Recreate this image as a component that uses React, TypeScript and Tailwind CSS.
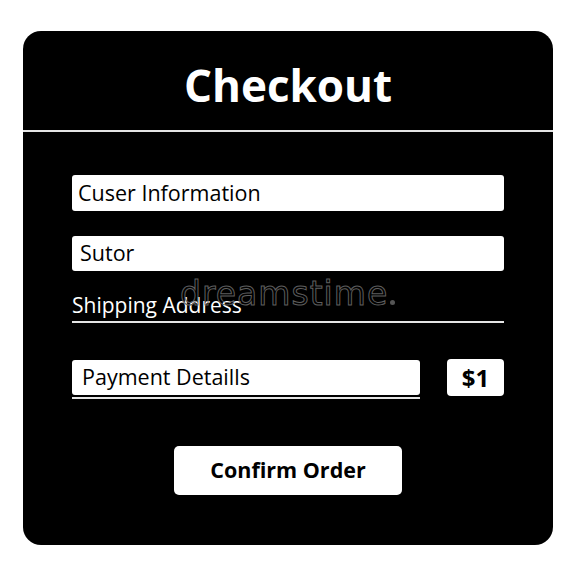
export default function App() {
  return (
    <div className="w-[576px] h-[576px] bg-white pt-[31px] pl-[23px]" style={{ fontFamily: '"Open Sans", "Noto Sans", sans-serif' }}>
      <div className="relative w-[530px] h-[514px] bg-black rounded-[18px] flex flex-col">
        <div className="h-[99px] flex items-center justify-center">
          <h1 className="text-white font-bold text-[44px] leading-none mt-[8px]">Checkout</h1>
        </div>
        <div className="h-[2px] bg-[#e5e5e5]" />
        <div className="px-[49px] pt-[43px] flex flex-col">
          <div className="h-[36px] bg-white rounded-[3px] flex items-center pl-[6px] text-[21.5px] text-black">
            Cuser Information
          </div>
          <div className="h-[35px] mt-[25px] bg-white rounded-[3px] flex items-center pl-[8px] text-[21.5px] text-black">
            Sutor
          </div>
          <div className="mt-[24px] text-white text-[21px] leading-none">Shipping Address</div>
          <div className="mt-[5px] h-[2px] bg-[#e5e5e5]" />
          <div className="mt-[37px] flex items-start justify-between">
            <div className="w-[348px] flex flex-col">
              <div className="h-[35px] bg-white rounded-[3px] flex items-center pl-[10px] text-[21.5px] text-black">
                Payment Detaills
              </div>
              <div className="mt-[2px] h-[2px] bg-[#e5e5e5]" />
            </div>
            <div className="w-[57px] h-[37px] -mt-[1px] bg-white rounded-[4px] flex items-center justify-center text-[24px] font-bold text-black">
              $1
            </div>
          </div>
          <div className="mt-[47px] flex justify-center">
            <div className="w-[228px] h-[49px] bg-white rounded-[5px] flex items-center justify-center text-[21.5px] font-bold text-black">
              Confirm Order
            </div>
          </div>
        </div>
        <div className="absolute left-[157px] top-[246px] flex items-end pointer-events-none">
          <span className="text-[33px] leading-none text-transparent [-webkit-text-stroke:1px_#5e5e5e] tracking-[1px]" style={{ fontFamily: '"DejaVu Sans", sans-serif' }}>
            dreamstime
          </span>
          <span className="w-[5px] h-[5px] rounded-full bg-[#555] mb-[5px] ml-[2px]" />
        </div>
      </div>
    </div>
  );
}
